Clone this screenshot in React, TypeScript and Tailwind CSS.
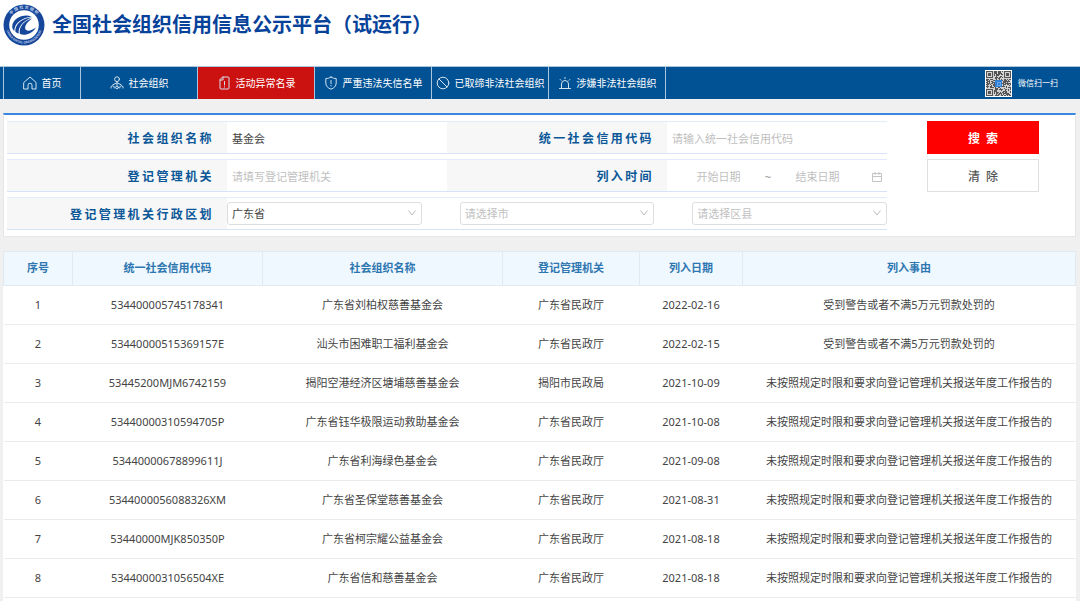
import React, { useState } from 'react';

interface NavItem {
  label: string;
  icon: React.ReactNode;
  active?: boolean;
}

interface RecordRow {
  code: string;
  name: string;
  organ: string;
  date: string;
  reason: string;
}

const WARNED = '受到警告或者不满5万元罚款处罚的';
const NOT_REPORTED = '未按照规定时限和要求向登记管理机关报送年度工作报告的';

const records: RecordRow[] = [
  { code: '534400005745178341', name: '广东省刘柏权慈善基金会', organ: '广东省民政厅', date: '2022-02-16', reason: WARNED },
  { code: '53440000515369157E', name: '汕头市困难职工福利基金会', organ: '广东省民政厅', date: '2022-02-15', reason: WARNED },
  { code: '53445200MJM6742159', name: '揭阳空港经济区塘埔慈善基金会', organ: '揭阳市民政局', date: '2021-10-09', reason: NOT_REPORTED },
  { code: '53440000310594705P', name: '广东省钰华极限运动救助基金会', organ: '广东省民政厅', date: '2021-10-08', reason: NOT_REPORTED },
  { code: '53440000678899611J', name: '广东省利海绿色基金会', organ: '广东省民政厅', date: '2021-09-08', reason: NOT_REPORTED },
  { code: '5344000056088326XM', name: '广东省圣保堂慈善基金会', organ: '广东省民政厅', date: '2021-08-31', reason: NOT_REPORTED },
  { code: '53440000MJK850350P', name: '广东省柯宗耀公益基金会', organ: '广东省民政厅', date: '2021-08-18', reason: NOT_REPORTED },
  { code: '5344000031056504XE', name: '广东省信和慈善基金会', organ: '广东省民政厅', date: '2021-08-18', reason: NOT_REPORTED },
];

const NavIcon = ({ children }: { children: React.ReactNode }) => (
  <svg viewBox="0 0 14 14" className="size-[14px] shrink-0" fill="none" stroke="#d3e3f0" strokeWidth="1" strokeLinejoin="round" strokeLinecap="round">
    {children}
  </svg>
);

const navItems: NavItem[] = [
  {
    label: '首页',
    icon: (
      <NavIcon>
        <path d="M1 6.3 7 1l6 5.3V13H9V9.2a2 2 0 0 0-4 0V13H1Z" />
      </NavIcon>
    ),
  },
  {
    label: '社会组织',
    icon: (
      <NavIcon>
        <circle cx="7" cy="3.2" r="2.4" />
        <path d="M7 5.6v3.6M6.500 7 2.800 8.800M7.500 7l3.700 1.800M1 12v-1c0-1.600 3.200-1.600 3.200 0v1M9.800 12v-1c0-1.600 3.200-1.600 3.200 0v1" />
        <circle cx="7" cy="11.4" r="1.4" />
      </NavIcon>
    ),
  },
  {
    label: '活动异常名录',
    active: true,
    icon: (
      <NavIcon>
        <path d="M6 1h5a1 1 0 0 1 1 1v10a1 1 0 0 1-1 1H4a1 1 0 0 1-1-1V4ZM6 1v3H3M7.500 5.500v3.500M7.500 10.800v.2" />
      </NavIcon>
    ),
  },
  {
    label: '严重违法失信名单',
    icon: (
      <NavIcon>
        <path d="M7 1c1.600 1.100 3.200 1.500 5.200 1.500V7c0 3-2 5-5.200 6.200C3.800 12 1.800 10 1.800 7V2.500C3.800 2.500 5.400 2.100 7 1ZM7 4.500v3.200M7 9.500v.4" />
      </NavIcon>
    ),
  },
  {
    label: '已取缔非法社会组织',
    icon: (
      <NavIcon>
        <circle cx="7" cy="7" r="5.8" />
        <path d="m3 3 8 8" />
      </NavIcon>
    ),
  },
  {
    label: '涉嫌非法社会组织',
    icon: (
      <NavIcon>
        <path d="M1.500 12.500h11M3.500 12.500V8a3.500 3.500 0 0 1 7 0v4.500M7 1.500v1M2.200 3.500l.8.8M11.800 3.500l-.8.8" />
      </NavIcon>
    ),
  },
];

const Logo = () => (
  <svg viewBox="0 0 42 42" className="size-[42px] shrink-0" role="img" aria-label="中国社会组织">
    <defs>
      <path id="ring-top" d="M4.600 21a16.400 16.400 0 0 1 32.800 0" />
      <path id="ring-bottom" d="M2.600 21a18.400 18.400 0 0 0 36.800 0" />
    </defs>
    <circle cx="21" cy="21" r="20.500" fill="#16479a" />
    <circle cx="21" cy="21" r="14.800" fill="#fff" />
    <g fill="#c3d2ea" fontSize="4" fontWeight="700" textAnchor="middle">
      <text>
        <textPath href="#ring-top" startOffset="50%">中 国 社 会 组 织</textPath>
      </text>
      <text fontSize="3">
        <textPath href="#ring-bottom" startOffset="50%">CHINA SOCIAL ORGANIZATION</textPath>
      </text>
    </g>
    <g fill="#16479a">
      <path d="M28.500 12.400C20 9.600 9.600 14.500 9.200 22.500c0 2 .8 3.400 2.200 4.500C11 19.500 18.500 13.800 28.500 12.400Z" />
      <path d="M29 13.400C20 13.600 11.800 19.800 12.300 27.600c.8 1 2 1.700 3.400 2C14.800 23 20 16.500 29 13.400Z" />
      <path d="M29.500 14.600c-8 1.700-13.800 8.200-12.700 15.200 4 2.200 12 .8 16.200-6.300-4.600 3.500-10.300 4.400-10.800 1.100-.4-3.200 2.600-7.300 7.300-10Z" />
    </g>
  </svg>
);

const QR_SIZE = 25;

const isDark = (x: number, y: number) => {
  const corners = [[0, 0], [QR_SIZE - 7, 0], [0, QR_SIZE - 7]];
  for (const [cx, cy] of corners) {
    const dx = x - cx;
    const dy = y - cy;
    if (dx >= -1 && dx <= 7 && dy >= -1 && dy <= 7) {
      const ring = Math.max(Math.abs(dx - 3), Math.abs(dy - 3));
      return ring === 3 || ring < 2;
    }
  }
  return (x * 37 + y * 61 + x * y * 13 + ((x * x) ^ (y * 7))) % 9 < 5;
};

const QrCode = () => (
  <svg viewBox="0 0 27 27" className="size-[27px] bg-white" role="img" aria-label="微信二维码" shapeRendering="crispEdges">
    <path d="M1 1h25v25H1z" fill="#d2d2d2" />
    {Array.from({ length: QR_SIZE * QR_SIZE }, (_, i) => {
      const x = i % QR_SIZE;
      const y = Math.floor(i / QR_SIZE);
      return isDark(x, y) ? <rect key={i} x={x + 1} y={y + 1} width="1" height="1" fill="#555" /> : null;
    })}
    <rect x="10" y="10" width="7" height="7" fill="#2f80d8" />
    <path d="M12 12h3v3h-3z" fill="none" stroke="#6aa8ea" />
  </svg>
);

const FieldLabel = ({ htmlFor, children }: { htmlFor: string; children: React.ReactNode }) => (
  <label htmlFor={htmlFor} className="flex w-1/4 shrink-0 items-center justify-end bg-[#f7f7f7] pt-[3px] pr-[13px] text-xs font-bold tracking-[0.2em] text-[#0b5797]">
    {children}
  </label>
);

const FieldRow = ({ children }: { children: React.ReactNode }) => (
  <div className="flex h-[33px] border-t border-b border-t-[#e4ecfb] border-b-[#d6e3f8]">{children}</div>
);

const FieldValue = ({ children }: { children: React.ReactNode }) => (
  <div className="flex w-1/4 items-center px-[5px] pt-[3px] text-[11px] text-[#999]">{children}</div>
);

interface RegionSelectProps {
  id: string;
  label?: string;
  options: string[];
  filled?: boolean;
}

const RegionSelect = ({ id, label, options, filled }: RegionSelectProps) => (
  <div className="relative flex-1">
    <select
      id={id}
      aria-label={label}
      className={`block h-[23px] w-full appearance-none rounded-[3px] border border-[#dedede] bg-white px-1 text-[11px] leading-4 outline-none ${filled ? 'text-[#444]' : 'text-[#bfbfbf]'}`}
    >
      {options.map((option) => (
        <option key={option}>{option}</option>
      ))}
    </select>
    <svg viewBox="0 0 8 6" className="pointer-events-none absolute top-2 right-[6px] h-[6px] w-2" fill="none" stroke="#bdbdbd">
      <path d="m.5.5 3.500 4.500L7.500.5" />
    </svg>
  </div>
);

const inputClass = 'w-full min-w-0 bg-transparent text-[11px] text-[#444] outline-none placeholder:text-[#bfbfbf]';

const SearchPanel = () => {
  const [name, setName] = useState('基金会');

  return (
    <form onSubmit={(e) => e.preventDefault()} className="mt-[14px] flex gap-10 border border-t-2 border-[#e6e6e6] border-t-[#3b86e0] bg-white pt-[6px] pr-9 pb-[6px] pl-[3px]">
      <div className="flex flex-1 flex-col gap-[5px]">
        <FieldRow>
          <FieldLabel htmlFor="org-name">社会组织名称</FieldLabel>
          <FieldValue>
            <input id="org-name" value={name} onChange={(e) => setName(e.target.value)} className={inputClass} />
          </FieldValue>
          <FieldLabel htmlFor="credit-code">统一社会信用代码</FieldLabel>
          <FieldValue>
            <input id="credit-code" placeholder="请输入统一社会信用代码" className={inputClass} />
          </FieldValue>
        </FieldRow>
        <FieldRow>
          <FieldLabel htmlFor="organ">登记管理机关</FieldLabel>
          <FieldValue>
            <input id="organ" placeholder="请填写登记管理机关" className={inputClass} />
          </FieldValue>
          <FieldLabel htmlFor="date-start">列入时间</FieldLabel>
          <FieldValue>
            <input id="date-start" placeholder="开始日期" className={`${inputClass} text-center`} />
            <span>~</span>
            <input aria-label="结束日期" placeholder="结束日期" className={`${inputClass} text-center`} />
            <button type="button" aria-label="选择日期" className="ml-2 shrink-0">
              <svg viewBox="0 0 10 10" className="block size-[10px]" fill="none" stroke="#c4c4c4">
                <path d="M.5 1.500h9v8h-9ZM.5 4.500h9M3 0v3M7 0v3" />
              </svg>
            </button>
          </FieldValue>
        </FieldRow>
        <FieldRow>
          <FieldLabel htmlFor="province">登记管理机关行政区划</FieldLabel>
          <div className="flex flex-1 items-center gap-[38px]">
            <RegionSelect id="province" options={['广东省']} filled />
            <RegionSelect id="city" label="市" options={['请选择市']} />
            <RegionSelect id="county" label="区县" options={['请选择区县']} />
          </div>
        </FieldRow>
      </div>
      <div className="flex w-28 flex-col gap-[5px]">
        <button type="submit" className="h-[33px] bg-[#fe0000] pt-[3px] text-xs font-bold text-white">搜 &nbsp;索</button>
        <button type="button" onClick={() => setName('')} className="h-[33px] border border-[#e0e0e0] pt-[3px] text-xs font-medium text-[#555]">清 &nbsp;除</button>
      </div>
    </form>
  );
};

const columns = [
  { title: '序号', width: 'w-[69px]' },
  { title: '统一社会信用代码', width: 'w-[190px]' },
  { title: '社会组织名称', width: 'w-[240px]' },
  { title: '登记管理机关', width: 'w-[137px]' },
  { title: '列入日期', width: 'w-[103px]' },
  { title: '列入事由', width: '' },
];

const RecordTable = () => (
  <div className="mt-[14px] flex-1 bg-white">
    <table className="w-full table-fixed border-collapse text-center text-[11px] text-[#444]">
      <thead>
        <tr className="h-[34px] bg-[#f0f8ff] text-[#2d76b0]">
          {columns.map((column) => (
            <th key={column.title} className={`border border-[#e2eaf0] font-bold ${column.width}`}>{column.title}</th>
          ))}
        </tr>
      </thead>
      <tbody>
        {records.map((record, index) => (
          <tr key={record.code} className="h-[39px] border-b border-[#ebebeb]">
            <td>{index + 1}</td>
            <td>{record.code}</td>
            <td>{record.name}</td>
            <td>{record.organ}</td>
            <td>{record.date}</td>
            <td>{record.reason}</td>
          </tr>
        ))}
      </tbody>
    </table>
  </div>
);

export default function App() {
  return (
    <div className="flex min-h-screen flex-col bg-[#f0f0f0] font-['Noto_Sans','Noto_Sans_CJK_SC',sans-serif]">
      <header className="flex h-[66px] items-start gap-[7px] bg-white pt-1 pl-[3px]">
        <Logo />
        <h1 className="text-xl leading-[42px] font-bold text-[#06429a]">全国社会组织信用信息公示平台（试运行）</h1>
      </header>

      <nav className="flex h-[33px] border-t border-[#a9c8e0] bg-[#005294] pl-[3px] text-[10px] text-white">
        {navItems.map((item, index) => (
          <a
            key={item.label}
            href="#"
            className={`flex items-center justify-center gap-[5px] border-l border-[#a9c8e0] whitespace-nowrap ${index === 0 ? 'w-[77px]' : 'w-[117px]'} ${item.active ? 'bg-[#cc1111]' : ''}`}
          >
            {item.icon}
            <span>{item.label}</span>
          </a>
        ))}
        <div className="flex flex-1 items-center justify-end gap-[6px] border-l border-[#a9c8e0] pr-[22px] text-[8px]">
          <QrCode />
          <span>微信扫一扫</span>
        </div>
      </nav>

      <main className="flex flex-1 flex-col pr-1 pl-[3px]">
        <SearchPanel />
        <RecordTable />
      </main>
    </div>
  );
}
